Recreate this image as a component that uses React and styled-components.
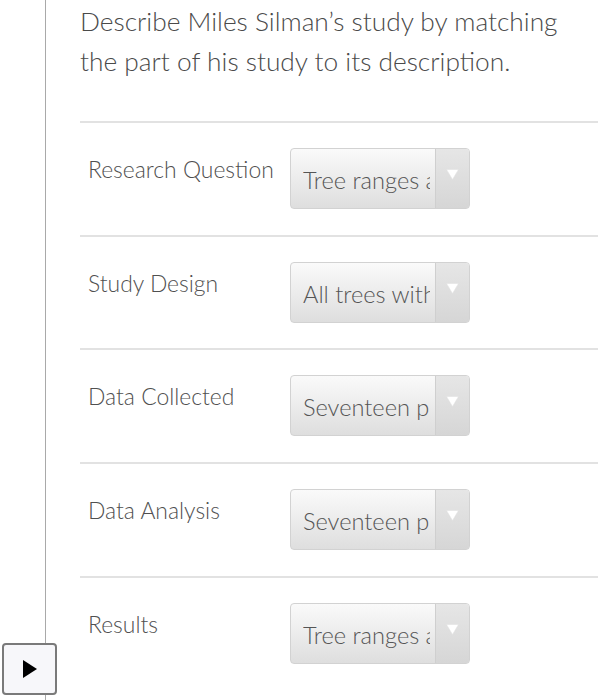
import React from "react";
import styled, { createGlobalStyle } from "styled-components";

const GlobalStyle = createGlobalStyle`
  html, body {
    margin: 0;
    padding: 0;
    background: #fff;
  }
  body {
    font-family: Lato, "Open Sans", sans-serif;
    font-weight: 300;
    color: #4b4b4b;
    overflow: hidden;
  }
`;

const Page = styled.div`
  position: relative;
  height: 700px;
  display: flex;
`;

const Gutter = styled.div`
  width: 45px;
  flex-shrink: 0;
  border-right: 1px solid #a9a9a9;
`;

const Content = styled.div`
  flex: 1;
  padding-left: 34px;
`;

const Prompt = styled.p`
  margin: 1px 0 0;
  font-size: 26.3px;
  line-height: 40px;
  color: #4a4a4a;
`;

const Rows = styled.div`
  margin-top: 40px;
`;

const Row = styled.div`
  display: flex;
  align-items: flex-start;
  height: 113.7px;
  box-sizing: border-box;
  border-top: 2px solid #e2e2e2;
  padding: 25px 0 0 8px;
`;

const Label = styled.div`
  width: 202px;
  flex-shrink: 0;
  padding-top: 8px;
  font-size: 22.9px;
  line-height: 26px;
  color: #505050;
`;

const Select = styled.div`
  display: flex;
  width: 180px;
  height: 61px;
  box-sizing: border-box;
  border: 1px solid #d2d2d2;
  border-radius: 4px;
  background: linear-gradient(#fafafa, #dedede);
  overflow: hidden;
`;

const Value = styled.div`
  flex: 1;
  display: flex;
  padding: 18px 5px 0 12px;
  border-right: 1px solid #cfcfcf;
  overflow: hidden;
`;

const ValueText = styled.span`
  flex: 1;
  overflow: hidden;
  white-space: nowrap;
  font-size: 23.6px;
  line-height: 27px;
  color: #555;
`;

const Caret = styled.div`
  width: 33px;
  flex-shrink: 0;
  display: flex;
  justify-content: center;
  padding-top: 20px;
  box-sizing: border-box;
  background: linear-gradient(#e6e6e6, #d6d6d6);
`;

const PlayButton = styled.button`
  position: absolute;
  left: 2px;
  top: 643px;
  width: 55px;
  height: 52px;
  box-sizing: border-box;
  border: 2px solid #7a7a7a;
  border-radius: 4px;
  background: #f7f7fa;
  display: flex;
  align-items: center;
  justify-content: center;
  padding: 0;
`;

const rows = [
  ["Research Question", "Tree ranges are shifting"],
  ["Study Design", "All trees within plots"],
  ["Data Collected", "Seventeen plots"],
  ["Data Analysis", "Seventeen plots"],
  ["Results", "Tree ranges are shifting"],
];

const CaretIcon = () => (
  <svg width="13" height="11" viewBox="0 0 13 11">
    <path d="M0.5 0.5 H12.5 L6.5 10.5 Z" fill="#fff" stroke="#e2e2e2" strokeWidth="0.6" />
  </svg>
);

export default function App() {
  return (
    <>
      <GlobalStyle />
      <Page>
        <Gutter />
        <Content>
          <Prompt>
            Describe Miles Silman’s study by matching
            <br />
            the part of his study to its description.
          </Prompt>
          <Rows>
            {rows.map(([label, value]) => (
              <Row key={label}>
                <Label>{label}</Label>
                <Select>
                  <Value>
                    <ValueText>{value}</ValueText>
                  </Value>
                  <Caret>
                    <CaretIcon />
                  </Caret>
                </Select>
              </Row>
            ))}
          </Rows>
        </Content>
        <PlayButton aria-label="Play">
          <svg width="16" height="18" viewBox="0 0 16 18">
            <path d="M1 0 L15 9 L1 18 Z" fill="#000" />
          </svg>
        </PlayButton>
      </Page>
    </>
  );
}
